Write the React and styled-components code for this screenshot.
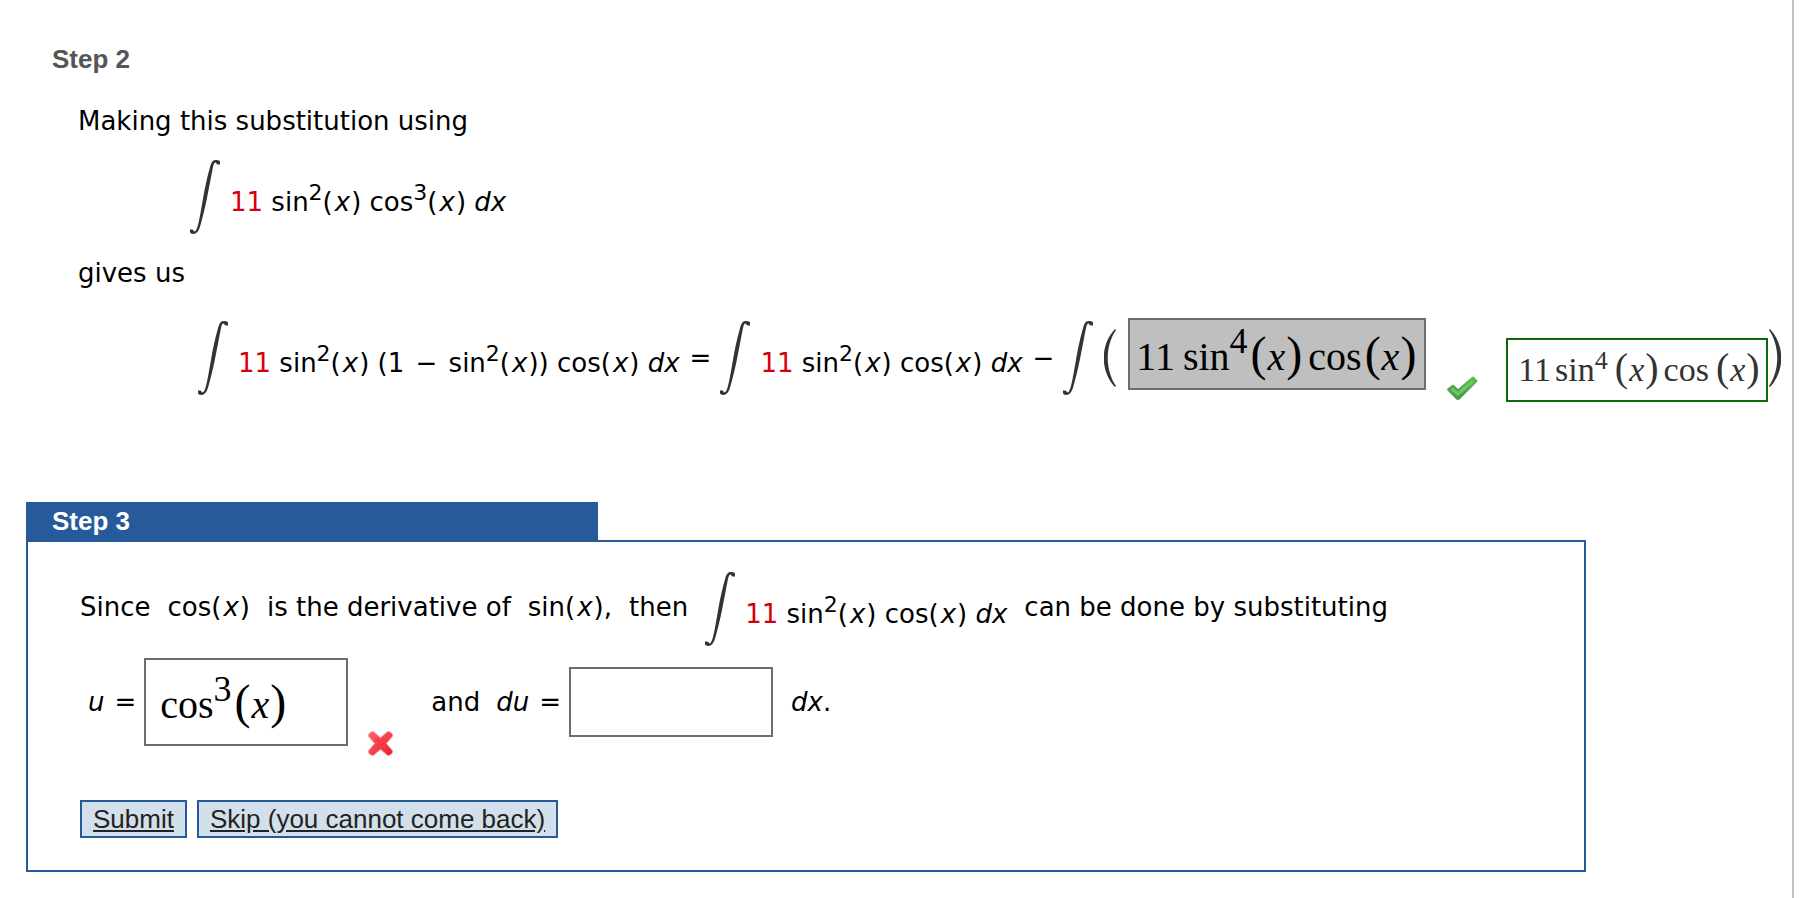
import React from "react";
import styled, { createGlobalStyle } from "styled-components";

const GlobalStyle = createGlobalStyle`
  body {
    margin: 0;
    background: #fff;
    color: #000;
    font-family: "DejaVu Sans", sans-serif;
    font-size: 26px;
    line-height: 32px;
  }
`;

const Sheet = styled.main`
  box-sizing: border-box;
  min-height: 100vh;
  margin-right: 8px;
  padding: 43px 0 26px;
  border-right: 2px solid #c0c0c0;
  white-space: nowrap;
`;

const StepTitle = styled.h2`
  margin: 0;
  padding-left: 52px;
  font-family: "Liberation Sans", Arial, sans-serif;
  font-size: 26px;
  font-weight: bold;
  color: #555;
`;

const Text = styled.p`
  margin: 0;
  padding-left: 78px;
`;

const Solved = styled.section`
  padding-bottom: 100px;
`;

const Intro = styled(Text)`
  margin-top: 30px;
`;

const Formula = styled.div`
  display: flex;
  align-items: center;
  margin: 23px 0;
  padding-left: 190px;
`;

const Equation = styled.div`
  display: flex;
  align-items: center;
  min-height: 88px;
  margin-top: 25px;
  padding-left: 198px;
`;

const TermBox = styled.span`
  display: flex;
  align-items: center;
  gap: 10px;
`;

const TermText = styled.span`
  padding-top: 10px;
`;

const Given = styled.span`
  color: #d4000f;
`;

const Var = styled.i`
  margin: 0 1px 0 2px;
`;

const Minus = styled.span`
  margin: 0 3px;
`;

const Sup = styled.sup`
  font-size: 22px;
  line-height: 0;
  vertical-align: 11px;
`;

const Operator = styled.span`
  margin: 0 9px 0 10px;
`;

const Drawing = styled.svg`
  display: block;
  flex: none;
`;

const BigParen = styled(Drawing)`
  margin: 0 ${(props) => (props.$close ? 0 : 12)}px 0 ${(props) => (props.$close ? 1 : 11)}px;
`;

const Mark = styled(Drawing)`
  align-self: flex-end;
  margin: 0 ${(props) => props.$after}px 1px ${(props) => props.$before}px;
`;

const MathBox = styled.span`
  box-sizing: border-box;
  position: relative;
  flex: none;
  display: flex;
  align-items: center;
  width: ${(props) => props.$width}px;
  height: ${(props) => props.$height}px;
  padding: 6px 0 0 ${(props) => (props.$locked ? 6 : 14)}px;
  border: 2px solid #6e6e6e;
  background: ${(props) => (props.$locked ? "#bfbfbf" : "#fff")};
  margin-bottom: ${(props) => (props.$locked ? 8 : 0)}px;
`;

const MathInput = styled.input`
  position: absolute;
  inset: 0;
  box-sizing: border-box;
  width: 100%;
  height: 100%;
  padding: 0 14px;
  border: 0;
  background: transparent;
  font-family: "Liberation Serif", serif;
  font-size: 40px;
`;

const Typeset = styled.span`
  display: flex;
  align-items: baseline;
  font-family: "Liberation Serif", "Times New Roman", serif;
  font-size: ${(props) => (props.$small ? 34 : 40)}px;
  line-height: 48px;
  color: ${(props) => (props.$small ? "#333" : "#000")};

  b {
    font-weight: normal;
    font-size: ${(props) => (props.$small ? 40 : 48)}px;
    line-height: 0;
  }

  i {
    margin: 0 1px;
  }

  sup {
    font-size: ${(props) => (props.$small ? 26 : 36)}px;
    line-height: 0;
    align-self: flex-start;
    margin-top: ${(props) => (props.$small ? 15 : 8)}px;
  }
`;

const Space = styled.span`
  width: ${(props) => props.$size}px;
`;

const AnswerKey = styled.span`
  box-sizing: border-box;
  flex: none;
  align-self: flex-end;
  display: flex;
  align-items: center;
  width: 262px;
  height: 64px;
  padding-left: 10px;
  border: 2px solid #0b6b0b;
`;

const Tab = styled.header`
  box-sizing: border-box;
  width: 572px;
  height: 38px;
  padding: 3px 0 0 26px;
  background: #265a9a;
`;

const TabTitle = styled(StepTitle)`
  padding-left: 0;
  color: #fff;
`;

const Active = styled.section`
  width: calc(100% - 232px);
  margin-left: 26px;
`;

const Panel = styled.form`
  border: 2px solid #265a9a;
  padding: 30px 0 32px 52px;
`;

const Sentence = styled.div`
  display: flex;
  align-items: center;
`;

const Phrase = styled.span`
  margin-right: ${(props) => props.$gap || 0}px;
`;

const Words = styled(Phrase)`
  padding-bottom: 4px;
`;

const AnswerRow = styled.div`
  display: flex;
  align-items: center;
  height: 112px;
  padding-left: 8px;
`;

const FieldLabel = styled.label`
  display: flex;
  gap: 10px;
  margin-right: 8px;
`;

const Buttons = styled.div`
  display: flex;
  gap: 10px;
  margin-top: 42px;
`;

const Button = styled.button`
  box-sizing: border-box;
  height: 38px;
  padding: 0 11px;
  border: 2px solid #265a96;
  background: #d2e0eb;
  color: #222;
  font-family: "Liberation Sans", Arial, sans-serif;
  font-size: 26px;
  line-height: 32px;
  text-decoration: underline;
`;

function Integral() {
  return (
    <Drawing width="30" height="74" viewBox="0 0 30 74" aria-hidden="true">
      <path
        fill="#333"
        d="M30 1.5 L30 4.5 L27.5 4.5 L25.5 2.5 C24 2.5 23.5 5 22.6 9 C20.8 18 19 28 17 38 C15 48 12.5 58 10.5 65 C9 70.5 7 74 3.5 74 C1.5 74 0 73 0 72 L0 69.5 L2.5 69.5 L4.5 71.5 C6 71.5 7 68.5 8 65 C10 57 11.5 47 13.3 37 C15 27 17.3 17 19.5 9 C21 3 22.5 0 25.5 0 C27.5 0 30 .5 30 1.5Z"
      />
    </Drawing>
  );
}

function Paren({ close }) {
  return (
    <BigParen $close={close} width="12" height="58" viewBox="0 0 12 58" aria-hidden="true">
      <path
        fill="#333"
        d={
          close
            ? "M0 1 L1 0 C16 16 16 42 1 58 L0 57 C11 41 11 17 0 1Z"
            : "M12 1 L11 0 C-4 16 -4 42 11 58 L12 57 C1 41 1 17 12 1Z"
        }
      />
    </BigParen>
  );
}

function Check() {
  return (
    <Mark $before={21} $after={28} width="31" height="25" viewBox="0 0 31 25" aria-label="Correct">
      <defs>
        <linearGradient id="check" x1="0" y1="0" x2="0" y2="1">
          <stop offset="0" stopColor="#62b85a" />
          <stop offset="1" stopColor="#43984a" />
        </linearGradient>
      </defs>
      <path fill="url(#check)" d="M0 13 L5 9 Q6 8 7 9 L11 13 L25 1 Q26 0 27 1 L30 4 Q31 5 30 6 L13 23 Q11 25 9 23 L1 15 Q0 14 0 13Z" />
      <path fill="none" stroke="#6cc864" strokeWidth="3" d="M5 13 L11 18 L26 5" />
    </Mark>
  );
}

function Cross() {
  return (
    <Mark $before={19} $after={37} width="27" height="27" viewBox="0 0 27 27" aria-label="Incorrect">
      <defs>
        <linearGradient id="cross" x1="0" y1="0" x2="1" y2="1">
          <stop offset="0" stopColor="#fb6a70" />
          <stop offset="1" stopColor="#ea1c2e" />
        </linearGradient>
      </defs>
      <path fill="url(#cross)" stroke="#fcb4b8" strokeWidth="1" strokeLinejoin="round" d="M1 6 Q1 4 3 2.5 Q5 1 6.500 1.500 L13.500 7.500 L20.500 1.500 Q22 1 24 2.500 Q26 4 26 6 L19.500 13.500 L26 21 Q26 23 24 24.500 Q22 26 20.500 25.500 L13.500 19.500 L6.500 25.500 Q5 26 3 24.500 Q1 23 1 21 L7.500 13.500Z" />
      <path fill="none" stroke="#f83a48" strokeWidth="4" d="M9 9 L18 18 M18 9 L9 18" />
    </Mark>
  );
}

function Term({ children }) {
  return (
    <TermBox>
      <Integral />
      <TermText>
        <Given>11</Given> {children}
      </TermText>
    </TermBox>
  );
}

function Fn({ name, power }) {
  return (
    <>
      {name}
      {power && <Sup>{power}</Sup>}(<Var>x</Var>)
    </>
  );
}

function Product({ small }) {
  return (
    <Typeset $small={small}>
      11
      <Space $size={small ? 4 : 8} />
      sin<sup>4</sup>
      <Space $size={small ? 7 : 3} />
      <b>(</b>
      <i>x</i>
      <b>)</b>
      <Space $size={small ? 5 : 6} />
      cos
      <Space $size={small ? 7 : 3} />
      <b>(</b>
      <i>x</i>
      <b>)</b>
    </Typeset>
  );
}

function App() {
  return (
    <>
      <GlobalStyle />
      <Sheet>
        <Solved>
          <StepTitle>Step 2</StepTitle>
          <Intro>Making this substitution using</Intro>
          <Formula>
            <Term>
              <Fn name="sin" power="2" /> <Fn name="cos" power="3" /> <i>dx</i>
            </Term>
          </Formula>
          <Text>gives us</Text>
          <Equation>
            <Term>
              <Fn name="sin" power="2" /> (1 <Minus>−</Minus> <Fn name="sin" power="2" />){" "}
              <Fn name="cos" /> <i>dx</i>
            </Term>
            <Operator>=</Operator>
            <Term>
              <Fn name="sin" power="2" /> <Fn name="cos" /> <i>dx</i>
            </Term>
            <Operator>−</Operator>
            <Integral />
            <Paren />
            <MathBox $locked $width={298} $height={72}>
              <MathInput aria-label="Step 2 answer" disabled />
              <Product />
            </MathBox>
            <Check />
            <AnswerKey>
              <Product small />
            </AnswerKey>
            <Paren close />
          </Equation>
        </Solved>

        <Active>
          <Tab>
            <TabTitle>Step 3</TabTitle>
          </Tab>
          <Panel onSubmit={(e) => e.preventDefault()}>
            <Sentence>
              <Words $gap={17}>Since</Words>
              <Words $gap={17}>
                <Fn name="cos" />
              </Words>
              <Words $gap={17}>is the derivative of</Words>
              <Words $gap={17}>
                <Fn name="sin" />,
              </Words>
              <Words $gap={17}>then</Words>
              <Term>
                <Fn name="sin" power="2" /> <Fn name="cos" /> <i>dx</i>
              </Term>
              <Words $gap={17} />
              <Words>can be done by substituting</Words>
            </Sentence>
            <AnswerRow>
              <FieldLabel htmlFor="u">
                <i>u</i> =
              </FieldLabel>
              <MathBox $width={204} $height={88}>
                <MathInput id="u" />
                <Typeset>
                  cos<sup>3</sup>
                  <Space $size={3} />
                  <b>(</b>
                  <i>x</i>
                  <b>)</b>
                </Typeset>
              </MathBox>
              <Cross />
              <Phrase $gap={16}>and</Phrase>
              <FieldLabel htmlFor="du">
                <i>du</i> =
              </FieldLabel>
              <MathBox $width={204} $height={70}>
                <MathInput id="du" />
              </MathBox>
              <Phrase $gap={18} />
              <Phrase>
                <i>dx</i>.
              </Phrase>
            </AnswerRow>
            <Buttons>
              <Button type="submit">Submit</Button>
              <Button type="button">Skip (you cannot come back)</Button>
            </Buttons>
          </Panel>
        </Active>
      </Sheet>
    </>
  );
}

export default App;
